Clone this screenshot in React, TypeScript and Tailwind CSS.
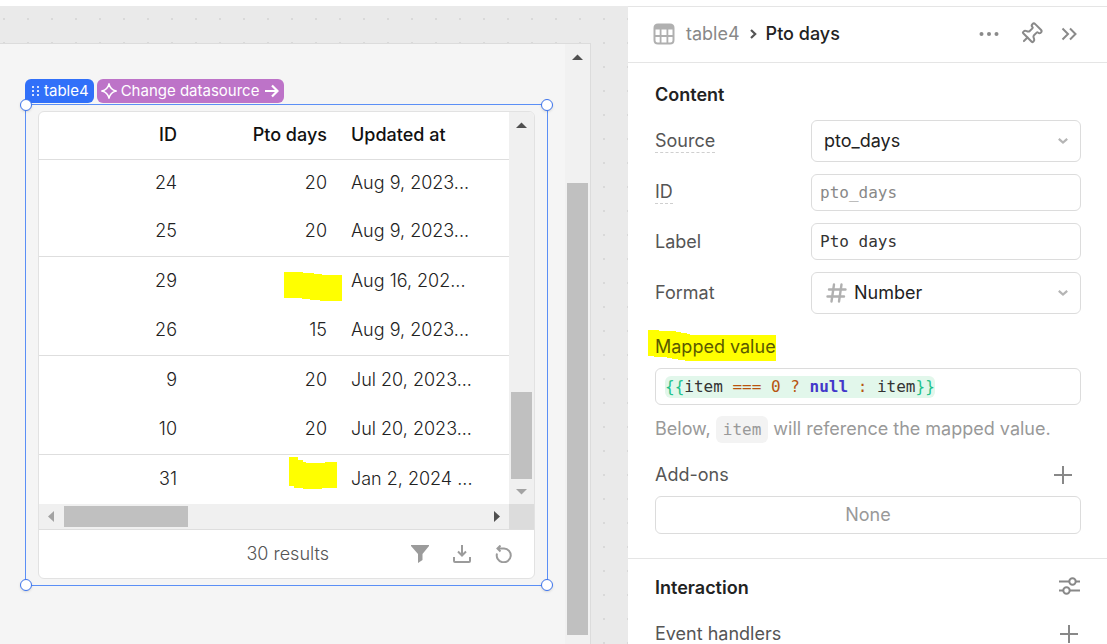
import React from "react";
import { Pin } from "lucide-react";

type Row = { id: string; days: string; updated: string; height: string; mark?: React.ReactNode };

const rows: Row[] = [
  { id: "24", days: "20", updated: "Aug 9, 2023...", height: "h-[47px]" },
  { id: "25", days: "20", updated: "Aug 9, 2023...", height: "h-[50px]" },
  {
    id: "29",
    days: "",
    updated: "Aug 16, 202...",
    height: "h-[49px]",
    mark: (
      <svg className="absolute top-[15px] right-[-3px]" width="58" height="29" viewBox="0 0 58 29" fill="#ffff00">
        <path d="M0 0H19V1H30V2H38V3H58V29H36V28H26V27H18V26H0Z" />
      </svg>
    ),
  },
  { id: "26", days: "15", updated: "Aug 9, 2023...", height: "h-[50px]" },
  { id: "9", days: "20", updated: "Jul 20, 2023...", height: "h-[49px]" },
  { id: "10", days: "20", updated: "Jul 20, 2023...", height: "h-[50px]" },
  {
    id: "31",
    days: "",
    updated: "Jan 2, 2024 ...",
    height: "h-[50px]",
    mark: (
      <svg className="absolute top-[2px] right-[2px]" width="48" height="32" viewBox="0 0 48 32" fill="#ffff00">
        <path d="M0 0H9V3H14V5H17V6H36V5H48V31H33V32H14V31H5V29H0Z" />
      </svg>
    ),
  },
];

const mono = "font-['DejaVu_Sans_Mono',monospace] text-base";

function Handle({ place }: { place: string }) {
  return <span className={`absolute size-3 rounded-full border border-[#3c74ee] bg-white shadow ${place}`} />;
}

function Arrow({ dir, color }: { dir: "up" | "down" | "left" | "right"; color: string }) {
  const d = {
    up: "M0 8L5.500 2.500L11 8Z",
    down: "M0 3L5.500 8.500L11 3Z",
    left: "M8 0L2 5.500L8 11Z",
    right: "M3 0L9 5.500L3 11Z",
  }[dir];
  return (
    <svg width="11" height="11" viewBox="0 0 11 11" fill={color}>
      <path d={d} />
    </svg>
  );
}

function DataTable() {
  return (
    <div className="overflow-hidden rounded-md border border-[#e2e2e2] bg-white">
      <div className="flex">
        <div className="min-w-0 flex-1">
          <table className="w-full table-fixed border-collapse text-lg text-[#222]">
            <thead>
              <tr className="h-[47px] border-b border-[#dedede] text-[#111]">
                <th className="w-[150px] pr-3 text-right font-medium">ID</th>
                <th className="w-[150px] pr-3 text-right font-medium">Pto days</th>
                <th className="pl-3 text-left font-medium">Updated at</th>
              </tr>
            </thead>
            <tbody className="font-light [font-optical-sizing:none]">
              {rows.map((r, i) => (
                <tr key={r.id} className={`${r.height} ${i % 2 === 1 ? "border-b border-[#dedede]" : ""}`}>
                  <td className="pr-3 text-right">{r.id}</td>
                  <td className="relative pr-3 text-right">
                    {r.days}
                    {r.mark}
                  </td>
                  <td className="overflow-hidden pl-3 text-left whitespace-nowrap">{r.updated}</td>
                </tr>
              ))}
            </tbody>
          </table>
        </div>
        <div className="flex w-[25px] flex-col items-center bg-[#f0f0f0] pt-2">
          <Arrow dir="up" color="#505050" />
          <div className="flex-1" />
          <div className="h-[87px] w-[21px] bg-[#c0c0c0]" />
          <div className="flex h-[25px] items-center">
            <Arrow dir="down" color="#a3a3a3" />
          </div>
        </div>
      </div>
      <div className="flex h-[25px] items-center bg-[#f0f0f0]">
        <div className="flex w-[25px] justify-center">
          <Arrow dir="left" color="#a3a3a3" />
        </div>
        <div className="h-[21px] w-[124px] bg-[#c0c0c0]" />
        <div className="flex-1" />
        <div className="flex w-[25px] justify-center">
          <Arrow dir="right" color="#505050" />
        </div>
        <div className="h-full w-[25px] bg-[#dcdcdc]" />
      </div>
      <div className="flex h-[49px] items-center justify-end gap-6 border-t border-[#dedede] pr-[21px] text-[#9b9b9b]">
        <span className="mr-[58px] text-lg font-light text-[#555] [font-optical-sizing:none]">30 results</span>
        <button type="button" aria-label="Filter">
          <svg width="18" height="18" viewBox="0 0 18 18" fill="currentColor">
            <path d="M0 0H18V1L11.500 9V15L7 18V9L0 1Z" />
          </svg>
        </button>
        <button type="button" aria-label="Download">
          <svg width="18" height="18" viewBox="0 0 18 18" fill="none" stroke="currentColor" strokeWidth="2">
            <path d="M9 0V10M5 6.500L9 10.500L13 6.500M1 12V16Q1 17 2 17H16Q17 17 17 16V12" />
          </svg>
        </button>
        <button type="button" aria-label="Refresh">
          <svg width="18" height="18" viewBox="0 0 18 18" fill="none" stroke="currentColor" strokeWidth="2">
            <path d="M2 8.500A7 6.900 0 1 0 9 3.500H3M5.500 0.500L2.500 3.500L5.500 6.500" />
          </svg>
        </button>
      </div>
    </div>
  );
}

function Canvas() {
  return (
    <main className="flex min-w-0 flex-1 flex-col bg-[#eaeaea] bg-[radial-gradient(circle,#d9d9d9_1px,transparent_1px)] bg-[size:24px_24px] bg-[position:-8px_1px] pt-[37px] pr-[37px]">
      <div className="flex flex-1 border-t border-r border-[#dcdcdc] bg-[#f5f5f5]">
        <div className="min-w-0 flex-1 pt-[35px] pr-[17px] pl-[25px]">
          <div className="flex h-6 gap-[3px] text-[15px] text-white">
            <span className="flex items-center gap-1 rounded-t-md rounded-br-md bg-[#3170f9] pr-[5px] pl-[6px]">
              <svg width="9" height="13" viewBox="0 0 9 13" fill="white" fillOpacity="0.8">
                <path d="M1 1h2v2H1zM6 1h2v2H6zM1 5h2v2H1zM6 5h2v2H6zM1 9h2v2H1zM6 9h2v2H6z" />
              </svg>
              table4
            </span>
            <button type="button" className="flex items-center gap-1 rounded-md bg-[#bd73c8] pr-[5px] pl-1">
              <svg width="16" height="16" viewBox="0 0 16 16" fill="none" stroke="white" strokeWidth="1.5" strokeLinejoin="round">
                <path d="M8 0.800Q9.300 6.700 15.200 8Q9.300 9.300 8 15.200Q6.700 9.300 0.800 8Q6.700 6.700 8 0.800Z" />
              </svg>
              Change datasource
              <svg className="ml-[2px]" width="14" height="14" viewBox="0 0 14 14" fill="none" stroke="white" strokeWidth="2.200">
                <path d="M0 7H12.500M7 1.500L12.500 7L7 12.500" />
              </svg>
            </button>
          </div>
          <div className="relative mt-px border border-[#5b8ff6] px-3 py-[6px]">
            <DataTable />
            <Handle place="-top-[6px] -left-[6px]" />
            <Handle place="-top-[6px] -right-[6px]" />
            <Handle place="-bottom-[6px] -left-[6px]" />
            <Handle place="-right-[6px] -bottom-[6px]" />
          </div>
        </div>
        <div className="flex w-[25px] flex-col items-center bg-[#f1f1f1] pt-2 pb-[9px]">
          <Arrow dir="up" color="#505050" />
          <div className="mt-[120px] w-[21px] flex-1 bg-[#c0c0c0]" />
        </div>
      </div>
    </main>
  );
}

const field = "min-w-0 rounded-md border border-[#dcdcdc] bg-white";

function PlusIcon() {
  return (
    <svg width="18" height="18" viewBox="0 0 18 18" fill="none" stroke="currentColor" strokeWidth="2">
      <path d="M9 0V18M0 9H18" />
    </svg>
  );
}

function SelectField({ id, value, icon }: { id: string; value: string; icon?: React.ReactNode }) {
  return (
    <div className={`${field} flex h-[42px] flex-1 items-center gap-[7px] px-3 text-[#222]`}>
      {icon}
      <select id={id} className="min-w-0 flex-1 appearance-none bg-transparent">
        <option>{value}</option>
      </select>
      <svg width="10" height="6" viewBox="0 0 10 6" fill="none" stroke="#b5b5b5" strokeWidth="2.200">
        <path d="M0.800 0.800L5 4.500L9.200 0.800" />
      </svg>
    </div>
  );
}

function FieldRow({ id, label, hint, children }: { id: string; label: string; hint?: boolean; children: React.ReactNode }) {
  return (
    <div className="flex items-center">
      <div className="flex w-[156px]">
        <label htmlFor={id} className={hint ? "border-b border-dashed border-[#cfcfcf] leading-[22px]" : "leading-6"}>
          {label}
        </label>
      </div>
      {children}
    </div>
  );
}

function Inspector() {
  return (
    <aside className="w-[479px] shrink-0 border-t border-[#e5e5e5] bg-white text-lg text-[#555]">
      <header className="flex h-14 items-center border-b border-[#e5e5e5] pr-[26px] pb-[2px] pl-[25px]">
        <svg width="22" height="22" viewBox="0 0 22 22" fill="#b0b0b0" fillRule="evenodd">
          <path d="M5 0.500H17Q21.500 0.500 21.500 5V17Q21.500 21.500 17 21.500H5Q0.500 21.500 0.500 17V5Q0.500 0.500 5 0.500ZM2.500 6.500V12H6.700V6.500ZM8.500 6.500V12H13.500V6.500ZM15.300 6.500V12H19.500V6.500ZM2.500 14V17.500Q2.500 19.500 4.500 19.500H6.700V14ZM8.500 14V19.500H13.500V14ZM15.300 14V19.500H17.500Q19.500 19.500 19.500 17.500V14Z" />
        </svg>
        <a href="#table4" className="ml-[11px] text-[#888]">
          table4
        </a>
        <svg className="mr-[9px] ml-[10px]" width="7" height="10" viewBox="0 0 7 10" fill="none" stroke="#555" strokeWidth="2.200">
          <path d="M1 1L5.200 5L1 9" />
        </svg>
        <h1 className="font-medium text-[#222]">Pto days</h1>
        <div className="ml-auto flex items-center gap-[14px] text-[#8a8a8a]">
          <button type="button" aria-label="More options" className="mr-[6px]">
            <svg width="20" height="6" viewBox="0 0 20 6" fill="currentColor">
              <circle cx="2.500" cy="3" r="2" />
              <circle cx="10" cy="3" r="2" />
              <circle cx="17.500" cy="3" r="2" />
            </svg>
          </button>
          <button type="button" aria-label="Pin panel">
            <Pin className="size-6 rotate-45" strokeWidth={2} />
          </button>
          <button type="button" aria-label="Collapse panel">
            <svg width="24" height="24" viewBox="0 0 24 24" fill="none" stroke="currentColor" strokeWidth="2">
              <path d="M5.500 6.500L11 12L5.500 17.500M13 6.500L18.500 12L13 17.500" />
            </svg>
          </button>
        </div>
      </header>

      <section className="border-b border-[#e5e5e5] pt-5 pr-[26px] pb-6 pl-[27px]">
        <h2 className="leading-6 font-semibold text-[#222]">Content</h2>
        <div className="mt-[13px] flex flex-col gap-3">
          <FieldRow id="source" label="Source" hint>
            <SelectField id="source" value="pto_days" />
          </FieldRow>
          <FieldRow id="column-id" label="ID" hint>
            <input id="column-id" defaultValue="pto_days" className={`${field} ${mono} h-[37px] flex-1 px-2 text-[#888]`} />
          </FieldRow>
          <FieldRow id="label" label="Label">
            <input id="label" defaultValue="Pto days" className={`${field} ${mono} h-[37px] flex-1 px-2 text-[#333]`} />
          </FieldRow>
          <FieldRow id="format" label="Format">
            <SelectField
              id="format"
              value="Number"
              icon={
                <svg className="ml-[2px]" width="21" height="20" viewBox="0 0 21 20" fill="none" stroke="#b0b0b0" strokeWidth="2.400" strokeLinecap="round">
                  <path d="M3 6.500H19.500M1.500 13.500H18M8 1.500L5.500 18.500M15.500 1.500L13 18.500" />
                </svg>
              }
            />
          </FieldRow>
        </div>

        <div className="relative mt-[21px] leading-6">
          <svg className="absolute -top-[5px] -left-[7px]" width="128" height="31" viewBox="0 0 128 31" fill="#ffff00">
            <path d="M0 0H11V1H28V2H33V3H39V4H42V5H128V31H37V30H30V29H24V28H19V27H6V26H0Z" />
          </svg>
          <span id="mapped" className="relative text-[#5a5a00]">Mapped value</span>
        </div>
        <div className={`${field} mt-[9px] flex h-[37px] items-center px-[9px]`}>
          <div
            role="textbox"
            aria-labelledby="mapped"
            contentEditable
            suppressContentEditableWarning
            className={`${mono} rounded-md bg-[#e2f7eb] leading-[22px] whitespace-pre text-[#333]`}
          >
            <span className="text-[#1fc28c]">{"{{"}</span>item <span className="text-[#b85410]">=== 0 ?</span>{" "}
            <span className="font-bold text-[#4338ca]">null</span> <span className="text-[#b85410]">:</span> item
            <span className="text-[#1fc28c]">{"}}"}</span>
          </div>
        </div>
        <p className="mt-[10px] leading-7 text-[#999]">
          Below, <code className={`${mono} rounded-md bg-[#f3f3f3] px-[7px] py-1`}>item</code> will reference the mapped value.
        </p>
        <div className="mt-5 flex items-center justify-between pr-[9px] leading-6">
          <span>Add-ons</span>
          <button type="button" aria-label="Add add-on" className="text-[#888]">
            <PlusIcon />
          </button>
        </div>
        <div className={`${field} mt-[9px] flex h-[38px] items-center justify-center text-[#999]`}>None</div>
      </section>

      <section className="pt-[17px] pr-[26px] pl-[27px]">
        <div className="flex items-center justify-between leading-6">
          <h2 className="font-semibold text-[#222]">Interaction</h2>
          <button type="button" aria-label="Interaction settings" className="pb-1 text-[#888]">
            <svg width="22" height="18" viewBox="0 0 22 18" fill="none" stroke="currentColor" strokeWidth="2">
              <path d="M0 4.500H10M17 4.500H21M0 13.500H4M11 13.500H21" />
              <circle cx="13.500" cy="4.500" r="3.200" />
              <circle cx="7.500" cy="13.500" r="3.200" />
            </svg>
          </button>
        </div>
        <div className="mt-[22px] flex items-center justify-between pr-[3px] leading-6">
          <span>Event handlers</span>
          <button type="button" aria-label="Add event handler" className="text-[#888]">
            <PlusIcon />
          </button>
        </div>
      </section>
    </aside>
  );
}

export default function App() {
  return (
    <div className="flex h-screen overflow-hidden bg-white pt-[6px] font-['Inter',sans-serif]">
      <Canvas />
      <Inspector />
    </div>
  );
}
